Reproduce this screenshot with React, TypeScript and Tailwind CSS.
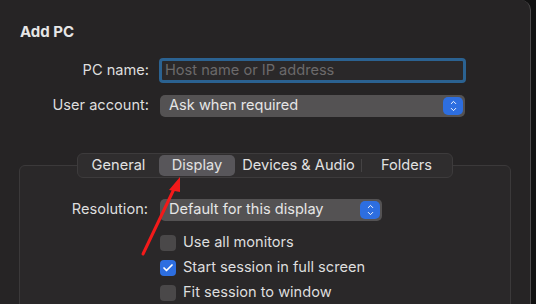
import { ChevronUp, ChevronDown, Check } from "lucide-react";

function Stepper() {
  return (
    <div className="w-[20px] h-[18px] rounded-[5px] bg-[#2d6ee0] flex flex-col items-center justify-center text-white">
      <ChevronUp size={9} strokeWidth={2.5} className="-mb-[1px]" />
      <ChevronDown size={9} strokeWidth={2.5} className="-mt-[1px]" />
    </div>
  );
}

function Box({ checked, label }: { checked?: boolean; label: string }) {
  return (
    <div className="flex items-center gap-[7px] h-[25px]">
      {checked ? (
        <div className="w-[16px] h-[16px] rounded-[4px] bg-[#2d6ee0] flex items-center justify-center text-white">
          <Check size={12} strokeWidth={3.5} />
        </div>
      ) : (
        <div className="w-[16px] h-[16px] rounded-[4px] bg-[#4a4849]" />
      )}
      <span>{label}</span>
    </div>
  );
}

export default function App() {
  const tabs = ["General", "Display", "Devices & Audio", "Folders"];
  return (
    <div className="w-[536px] h-[304px] bg-[#111] overflow-hidden relative" style={{ fontFamily: "Inter, 'Noto Sans', sans-serif" }}>
      <div className="w-[531px] h-full bg-[#262425] rounded-tr-[10px] border-r border-[#4d4b4c] text-[#dedede] text-[14.6px]">
        <div className="pt-[23px] pl-[20px] font-bold text-[15px] leading-[17px] text-[#e6e6e6]">Add PC</div>

        <div className="mt-[18px] flex items-center">
          <div className="w-[149px] text-right">PC name:</div>
          <div className="ml-[10px] w-[307px] h-[25px] rounded-[4px] border-[3px] border-[#2b6291] bg-[#2a2829] flex items-center px-[3px] text-[#6c6a6b]">
            Host name or IP address
          </div>
        </div>

        <div className="mt-[12px] flex items-center">
          <div className="w-[149px] text-right">User account:</div>
          <div className="ml-[11px] w-[305px] h-[22px] rounded-[5px] bg-[#545253] flex items-center justify-between pl-[9px] pr-[2px] text-[#e6e6e6]">
            <span>Ask when required</span>
            <Stepper />
          </div>
        </div>

        <div className="relative mt-[36px] ml-[19px] mr-[19px]">
          <div className="absolute left-0 right-0 top-[12px] h-[200px] border border-[#3b393a] rounded-[6px] bg-[#2a2829]" />
          <div className="relative flex justify-center">
            <div className="flex items-center h-[25px] rounded-[6px] border border-[#3d3b3c] bg-[#2f2d2e] p-[1px]">
              {tabs.map((t, i) => (
                <div key={t} className="flex items-center">
                  <div className={`h-[21px] flex items-center justify-center rounded-[5px] text-[#e2e2e2] ${i === 1 ? "bg-[#58565a] w-[76px] mx-[1px]" : i === 0 ? "w-[79px]" : i === 2 ? "w-[125px]" : "w-[89px]"}`}>
                    {t}
                  </div>
                  {i === 2 && <div className="w-px h-[13px] bg-[#454344]" />}
                </div>
              ))}
            </div>
          </div>

          <div className="relative mt-[21px] flex items-center">
            <div className="w-[129px] text-right">Resolution:</div>
            <div className="ml-[12px] w-[222px] h-[22px] rounded-[5px] bg-[#545253] flex items-center justify-between pl-[9px] pr-[2px] text-[#e6e6e6]">
              <span>Default for this display</span>
              <Stepper />
            </div>
          </div>

          <div className="relative mt-[9px] ml-[141px] flex flex-col">
            <Box label="Use all monitors" />
            <Box checked label="Start session in full screen" />
            <Box label="Fit session to window" />
          </div>
        </div>
      </div>

      <svg className="absolute left-0 top-0" width="536" height="304">
        <line x1="143" y1="254" x2="174" y2="189" stroke="#f21a1a" strokeWidth="3" strokeLinecap="round" />
        <polygon points="180,177 169,190 180,192" fill="#f21a1a" />
      </svg>
    </div>
  );
}
